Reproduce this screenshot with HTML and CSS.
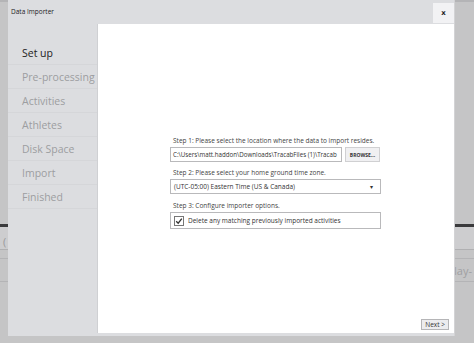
FILE: index.html
```html
<!DOCTYPE html>
<html lang="en">

<head>
    <meta charset="UTF-8">
    <meta name="viewport" content="width=device-width, initial-scale=1.0">
    <title>Data Importer</title>
    <link rel="stylesheet" href="styles.css">
</head>

<body>
    <div class="app">
        <div class="app-tabs"></div>
        <div class="app-band">
            <span class="app-left">(</span>
        </div>
        <div class="app-row">
            <span class="app-right">play-</span>
        </div>
    </div>

    <div class="dialog">
        <div class="dialog-title">
            <span>Data Importer</span>
            <button class="close">x</button>
        </div>
        <div class="dialog-body">
            <ul class="steps">
                <li class="current">Set up</li>
                <li>Pre-processing</li>
                <li>Activities</li>
                <li>Athletes</li>
                <li>Disk Space</li>
                <li>Import</li>
                <li>Finished</li>
            </ul>
            <div class="panel">
                <div class="form">
                    <p>Step 1: Please select the location where the data to import resides.</p>
                    <div class="row">
                        <div class="field path">C:\Users\matt.haddon\Downloads\TracabFiles (1)\Tracab</div>
                        <button class="browse">BROWSE...</button>
                    </div>
                    <p>Step 2: Please select your home ground time zone.</p>
                    <div class="field select">
                        <span>(UTC-05:00) Eastern Time (US &amp; Canada)</span>
                        <span class="arrow">&#9662;</span>
                    </div>
                    <p>Step 3: Configure importer options.</p>
                    <div class="field option">
                        <span class="check">
                            <svg width="8" height="8" viewBox="0 0 8 8">
                                <path d="M1.2 4.2 L3.2 6.2 L6.8 1.6" fill="none" stroke="#333" stroke-width="1.3" />
                            </svg>
                        </span>
                        <span>Delete any matching previously imported activities</span>
                    </div>
                </div>
                <div class="footer">
                    <button class="next">Next &gt;</button>
                </div>
            </div>
        </div>
    </div>
</body>

</html>
```

FILE: styles.css
```css
/* Page behind the dialog */
body {
    margin: 0;
    width: 474px;
    height: 343px;
    overflow: hidden;
    background-color: #c5c5c6;
    font-family: "Open Sans", "Noto Sans", sans-serif;
    color: #333;
}

.app {
    height: 343px;
}

.app-tabs {
    height: 2px;
    background-color: #b4b4b6;
}

.app-band {
    margin-top: 222px;
    height: 22px;
    border-top: 3px solid #3a3a3c;
    border-bottom: 1px solid #b0b0b2;
    background-color: #cdcdcf;
    display: flex;
    align-items: flex-end;
    font-size: 11px;
    color: #9a9a9c;
}

.app-row {
    margin-top: 8px;
    height: 22px;
    border-top: 1px solid #b4b4b6;
    border-bottom: 1px solid #b4b4b6;
    display: flex;
    justify-content: flex-end;
    align-items: center;
    font-size: 11px;
    color: #a0a0a2;
}

.app-left {
    padding-left: 3px;
}

.app-right {
    padding-right: 2px;
}

/* Modal */
.dialog {
    position: absolute;
    left: 8px;
    top: 0;
    width: 446px;
    height: 336px;
    background-color: #dcdde0;
    display: flex;
    flex-direction: column;
    box-shadow: 1px 0 0 #d3d3d5;
}

.dialog-title {
    height: 24px;
    display: flex;
    justify-content: space-between;
    align-items: flex-start;
    font-size: 6.5px;
    color: #222;
}

.dialog-title span {
    padding: 7px 0 0 3px;
}

.close {
    margin-top: 3px;
    width: 21px;
    height: 20px;
    border: none;
    background-color: #f2f2f4;
    font-family: "DejaVu Sans", sans-serif;
    font-size: 7px;
    font-weight: bold;
    color: #222;
    padding: 0;
}

.dialog-body {
    flex: 1;
    display: flex;
    padding-bottom: 3px;
}

.steps {
    list-style: none;
    margin: 0;
    width: 89px;
    padding: 17px 0 0 0;
}

.steps li {
    height: 24px;
    line-height: 24px;
    padding-left: 14px;
    font-size: 10.5px;
    white-space: nowrap;
    color: #9d9ea1;
    border-bottom: 1px solid #d5d6d9;
    box-sizing: border-box;
}

.steps li.current {
    color: #222;
}

.panel {
    flex: 1;
    background-color: #fff;
    display: flex;
    flex-direction: column;
    border-left: 1px solid #cfd0d3;
}

.form {
    flex: 1;
    padding: 112px 0 0 72px;
    width: 211px;
    font-size: 6.5px;
}

.form p {
    margin: 0 0 2px 3px;
    height: 9px;
    line-height: 9px;
    white-space: nowrap;
    color: #444;
}

.row {
    display: flex;
    gap: 3px;
    margin-bottom: 6px;
}

.field {
    height: 15px;
    border: 1px solid #b9b9bb;
    box-sizing: border-box;
    display: flex;
    align-items: center;
    padding-left: 3px;
    white-space: nowrap;
    overflow: hidden;
    color: #333;
}

.path {
    width: 172px;
    padding-left: 2px;
    font-size: 6.2px;
}

.browse {
    width: 35px;
    height: 15px;
    border: 1px solid #d0d0d2;
    background-color: #f0f0f2;
    font-family: "Open Sans", sans-serif;
    font-size: 5px;
    font-weight: bold;
    color: #333;
    padding: 0;
}

.select {
    justify-content: space-between;
    margin-bottom: 7px;
}

.arrow {
    padding-right: 7px;
    font-size: 6px;
}

.option {
    height: 17px;
    gap: 4px;
}

.check {
    width: 8px;
    height: 8px;
    border: 1px solid #777;
    display: flex;
}

.footer {
    display: flex;
    justify-content: flex-end;
    padding: 0 5px 3px 0;
}

.next {
    height: 11px;
    padding: 0 3px;
    border: 1px solid #b5b5b7;
    background-color: #ececee;
    font-family: "Open Sans", sans-serif;
    font-size: 6.5px;
    color: #333;
    line-height: 9px;
}
```
